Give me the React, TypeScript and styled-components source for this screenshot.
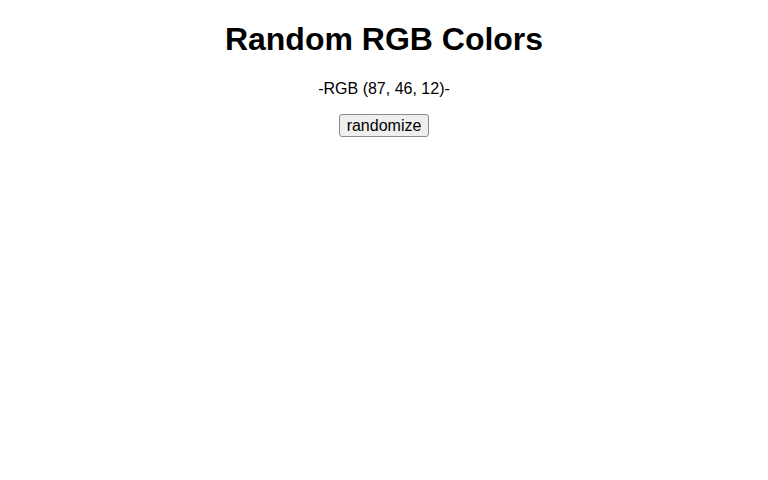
import React, { useState } from 'react';
import styled, { createGlobalStyle } from 'styled-components';

const GlobalStyle = createGlobalStyle`
	body {
		margin: 0;
		background: #ffffff;
		font-family: "Liberation Sans", Arial, sans-serif;
		color: #000000;
	}
`;

const Page = styled.div`
	display: flex;
	flex-direction: column;
	align-items: center;
	text-align: center;
`;

const Title = styled.h1`
	font-size: 32px;
	font-weight: bold;
	margin: 21.44px 0;
`;

const ColorLabel = styled.p`
	font-size: 16px;
	margin: 0 0 16px;
`;

const RandomizeButton = styled.button`
	box-sizing: border-box;
	height: 23px;
	font-family: "Liberation Sans", Arial, sans-serif;
	font-size: 16px;
	line-height: 19px;
	color: #000000;
	background: #efefef;
	border: 1px solid #8a8a8a;
	border-radius: 3px;
	padding: 1px 7px;
	cursor: pointer;

	&:hover {
		background: #e5e5e5;
	}
`;

const randomChannel = () => Math.floor(Math.random() * 256);

export default function App() {
	const [rgb, setRgb] = useState<[number, number, number]>([87, 46, 12]);

	return (
		<Page>
			<GlobalStyle />
			<Title>Random RGB Colors</Title>
			<ColorLabel>-RGB ({rgb[0]}, {rgb[1]}, {rgb[2]})-</ColorLabel>
			<RandomizeButton
				onClick={() => setRgb([randomChannel(), randomChannel(), randomChannel()])}
			>
				randomize
			</RandomizeButton>
		</Page>
	);
}
